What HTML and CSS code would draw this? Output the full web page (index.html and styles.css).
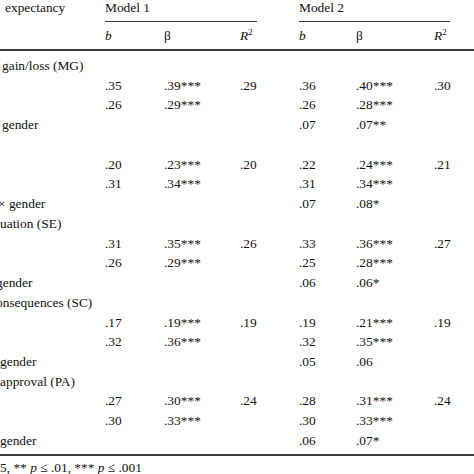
FILE: index.html
```html
<!DOCTYPE html>
<html>
<head>
<meta charset="utf-8">
<link rel="stylesheet" href="styles.css">
</head>
<body>
<div class="page">
  <div class="row head1">
    <div class="lab ind5">expectancy</div>
    <div class="model m1"><span>Model 1</span></div>
    <div class="model m2"><span>Model 2</span></div>
  </div>
  <div class="row head2">
    <div class="lab"></div>
    <div><i>b</i></div><div>β</div><div><i>R</i><sup>2</sup></div>
    <div><i>b</i></div><div>β</div><div><i>R</i><sup>2</sup></div>
  </div>
  <div class="body">
    <div class="row"><div class="lab ind2">gain/loss (MG)</div></div>
    <div class="row"><div class="lab"></div><div>.35</div><div>.39***</div><div>.29</div><div>.36</div><div>.40***</div><div>.30</div></div>
    <div class="row"><div class="lab"></div><div>.26</div><div>.29***</div><div></div><div>.26</div><div>.28***</div><div></div></div>
    <div class="row"><div class="lab ind2">gender</div><div></div><div></div><div></div><div>.07</div><div>.07**</div><div></div></div>
    <div class="row"><div class="lab"></div></div>
    <div class="row"><div class="lab"></div><div>.20</div><div>.23***</div><div>.20</div><div>.22</div><div>.24***</div><div>.21</div></div>
    <div class="row"><div class="lab"></div><div>.31</div><div>.34***</div><div></div><div>.31</div><div>.34***</div><div></div></div>
    <div class="row"><div class="lab cut2">× gender</div><div></div><div></div><div></div><div>.07</div><div>.08*</div><div></div></div>
    <div class="row"><div class="lab">uation (SE)</div></div>
    <div class="row"><div class="lab"></div><div>.31</div><div>.35***</div><div>.26</div><div>.33</div><div>.36***</div><div>.27</div></div>
    <div class="row"><div class="lab"></div><div>.26</div><div>.29***</div><div></div><div>.25</div><div>.28***</div><div></div></div>
    <div class="row"><div class="lab cut4">gender</div><div></div><div></div><div></div><div>.06</div><div>.06*</div><div></div></div>
    <div class="row"><div class="lab cut4">onsequences (SC)</div></div>
    <div class="row"><div class="lab"></div><div>.17</div><div>.19***</div><div>.19</div><div>.19</div><div>.21***</div><div>.19</div></div>
    <div class="row"><div class="lab"></div><div>.32</div><div>.36***</div><div></div><div>.32</div><div>.35***</div><div></div></div>
    <div class="row"><div class="lab">gender</div><div></div><div></div><div></div><div>.05</div><div>.06</div><div></div></div>
    <div class="row"><div class="lab">approval (PA)</div></div>
    <div class="row"><div class="lab"></div><div>.27</div><div>.30***</div><div>.24</div><div>.28</div><div>.31***</div><div>.24</div></div>
    <div class="row"><div class="lab"></div><div>.30</div><div>.33***</div><div></div><div>.30</div><div>.33***</div><div></div></div>
    <div class="row"><div class="lab">gender</div><div></div><div></div><div></div><div>.06</div><div>.07*</div><div></div></div>
  </div>
  <div class="foot">5, ** <i>p</i> ≤ .01, *** <i>p</i> ≤ .001</div>
</div>
</body>
</html>
```
FILE: styles.css
```css
html, body {
  margin: 0;
  padding: 0;
  background: #ffffff;
  overflow: hidden;
}
body {
  width: 474px;
  height: 474px;
  font-family: "Liberation Serif", "Times New Roman", Times, serif;
  font-size: 13.4px;
  color: #111111;
}
.page {
  margin-top: -2px;
}
.row {
  display: grid;
  grid-template-columns: 105px 59px 76px 59px 57px 78px 40px;
  white-space: nowrap;
}
.ind5 { padding-left: 5px; }
.ind2 { padding-left: 2px; }
.cut2 { margin-left: -2px; }
.cut4 { margin-left: -4px; }

.head1 {
  grid-template-columns: 105px 194px 175px;
}
.head1 > div {
  line-height: 20px;
  padding-bottom: 4px;
}
.model span {
  display: block;
}
.m1 {
  margin-right: 42px;
  border-bottom: 1px solid #3a3a3a;
  padding-bottom: 3px !important;
}
.m2 {
  margin-right: 24px;
  border-bottom: 1px solid #3a3a3a;
  padding-bottom: 3px !important;
}
.head2 {
  line-height: 27px;
  border-bottom: 2px solid #3a3a3a;
}
.head2 sup {
  font-size: 9px;
  line-height: 0;
  vertical-align: 5px;
}
.body {
  padding-top: 5px;
  padding-bottom: 3px;
  border-bottom: 2px solid #3a3a3a;
}
.body .row {
  line-height: 19.74px;
  height: 19.74px;
}
.foot {
  line-height: 20px;
  padding-top: 2px;
}
```
